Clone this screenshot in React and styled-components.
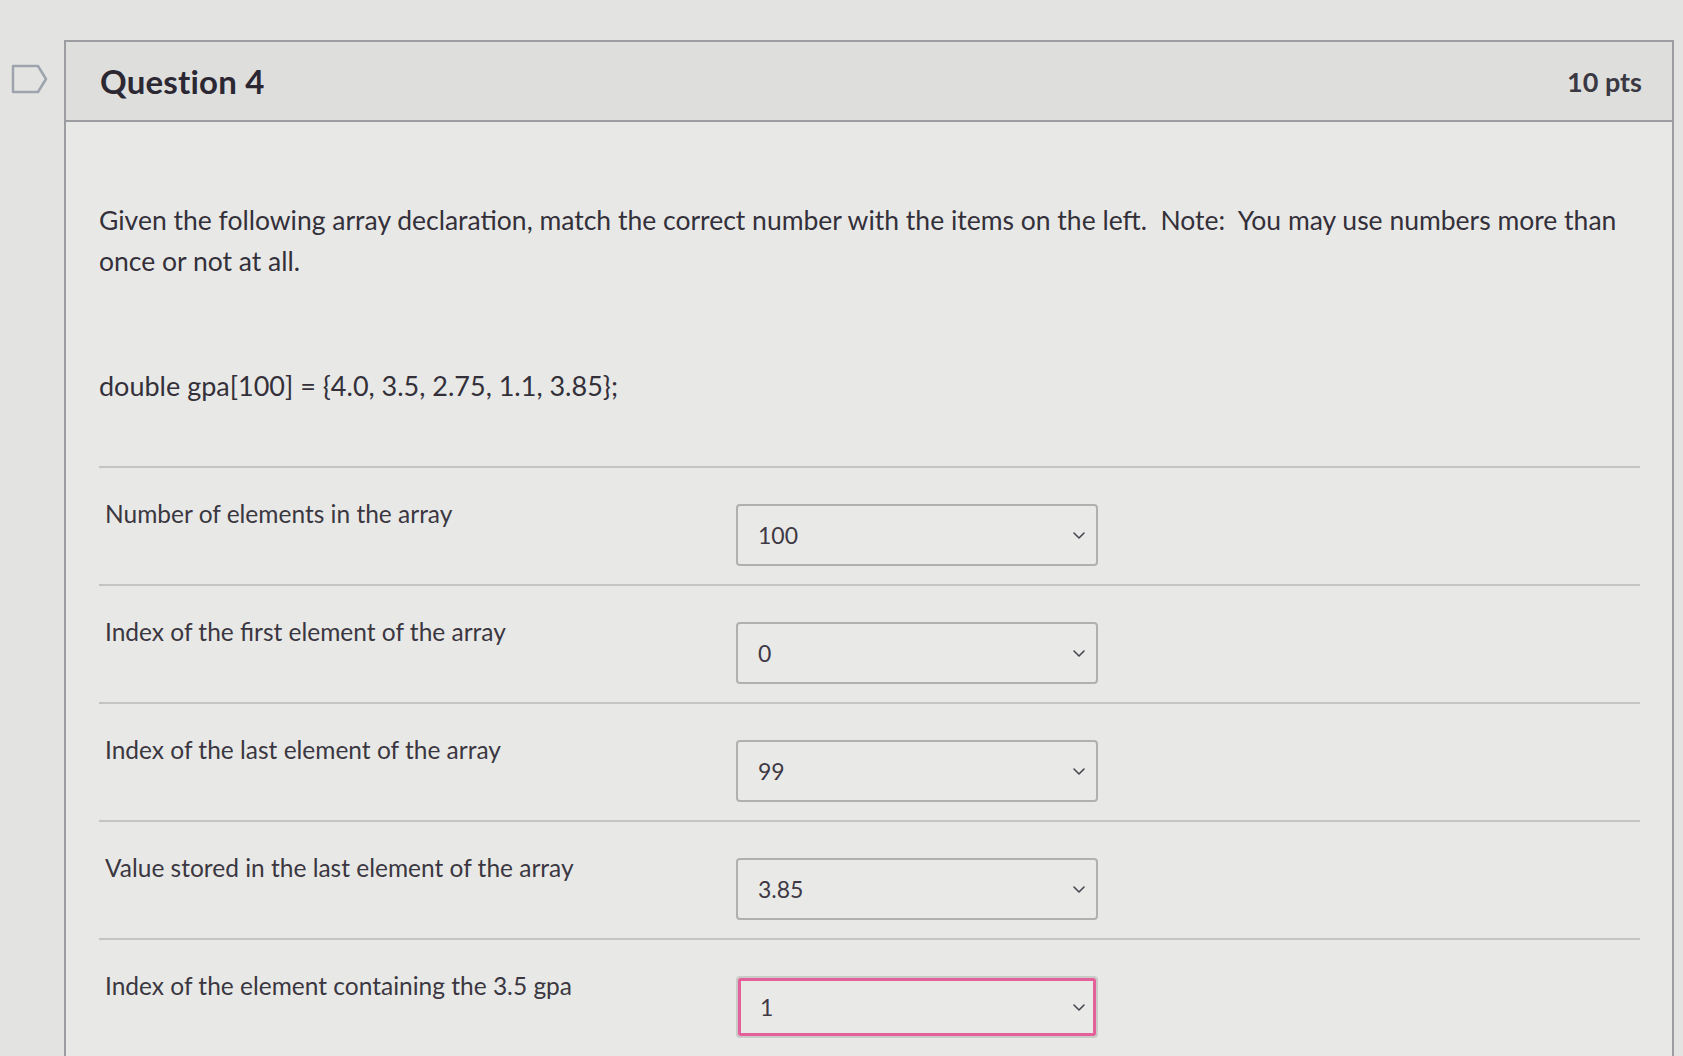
import React from 'react'
import styled, { createGlobalStyle } from 'styled-components';

const GlobalStyle = createGlobalStyle`
body{
  margin:0;
  background:#e3e4e2;
  font-family:Lato, "Open Sans", sans-serif;
  color:#34303a;
}
`;

const Page = styled.div`
display:flex;
align-items:flex-start;
gap:16px;
padding:40px 0 0 11px;
height:1016px;
overflow:hidden;
`;

const Flag = styled.div`
margin-top:24px;
width:37px;
height:30px;
flex-shrink:0;
display:flex;
`;

const Card = styled.div`
width:1606px;
min-height:1100px;
border:2px solid #9b9da0;
border-bottom:none;
background:#e8e9e7;
`;

const Header = styled.div`
display:flex;
justify-content:space-between;
align-items:center;
height:78px;
padding:0 30px 0 34px;
background:#dedfdd;
border-bottom:2px solid #9b9da0;
`;

const Title = styled.h2`
margin:0;
font-size:33px;
font-weight:700;
color:#2c2833;
letter-spacing:0.2px;
`;

const Points = styled.span`
font-size:27px;
font-weight:700;
color:#3a3843;
`;

const Body = styled.div`
padding:78px 32px 0 33px;
`;

const Text = styled.p`
margin:0;
font-size:26.5px;
line-height:41px;
color:#34303a;
`;

const Code = styled(Text)`
margin-top:83px;
font-size:27px;
`;

const Answers = styled.div`
margin-top:60px;
`;

const Row = styled.div`
display:flex;
align-items:flex-start;
padding:36px 0 18px 6px;
border-top:2px solid #c3c5c3;
`;

const Label = styled.div`
width:631px;
margin-top:-4px;
font-size:24.5px;
line-height:28px;
color:#3b3741;
`;

const Select = styled.div`
display:flex;
align-items:center;
justify-content:space-between;
box-sizing:border-box;
width:362px;
height:62px;
padding:0 10px 0 20px;
border-radius:4px;
border:2px solid #afb1b0;
background:#e9eae8;
font-size:23px;
color:#3e3944;
${({$focus})=>$focus && `
  box-shadow:inset 0 0 0 3px #e3609a;
  border-color:#c9cbc9;
  padding-left:22px;
`}
`;

const Chevron = () => (
  <svg width="14" height="9" viewBox="0 0 14 9" fill="none">
    <path d="M2 2l5 5 5-5" stroke="#4a4650" strokeWidth="1.6" strokeLinecap="round" strokeLinejoin="round"/>
  </svg>
);

const answers = [
  { label: 'Number of elements in the array', value: '100' },
  { label: 'Index of the first element of the array', value: '0' },
  { label: 'Index of the last element of the array', value: '99' },
  { label: 'Value stored in the last element of the array', value: '3.85' },
  { label: 'Index of the element containing the 3.5 gpa', value: '1', focus: true },
];

const App = () => {
  return (
    <>
      <GlobalStyle />
      <Page>
        <Flag>
          <svg width="37" height="30" viewBox="0 0 37 30" fill="none">
            <path d="M2 2h25l8 13-8 13H2z" stroke="#9ea4ad" strokeWidth="2.5" strokeLinejoin="round"/>
          </svg>
        </Flag>
        <Card>
          <Header>
            <Title>Question 4</Title>
            <Points>10 pts</Points>
          </Header>
          <Body>
            <Text>
              Given the following array declaration, match the correct number with the items on the left.&nbsp; Note:&nbsp; You may use numbers more than once or not at all.
            </Text>
            <Code>double gpa[100] = &#123;4.0, 3.5, 2.75, 1.1, 3.85&#125;;</Code>
            <Answers>
              {answers.map((a) => (
                <Row key={a.label}>
                  <Label>{a.label}</Label>
                  <Select $focus={a.focus}>
                    <span>{a.value}</span>
                    <Chevron />
                  </Select>
                </Row>
              ))}
            </Answers>
          </Body>
        </Card>
      </Page>
    </>
  );
};

export default App;
